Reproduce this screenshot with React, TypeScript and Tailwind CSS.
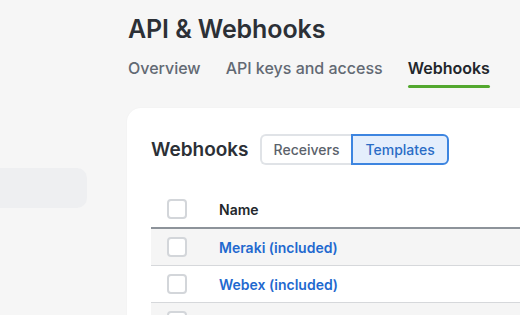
export default function App() {
  const rows = [
    { name: 'Meraki (included)', shaded: true },
    { name: 'Webex (included)', shaded: false },
    { name: '', shaded: true },
  ];

  return (
    <div className="flex h-[315px] w-[520px] overflow-hidden bg-[#f6f6f6] font-['Inter',sans-serif]">
      {/* side nav */}
      <div className="w-[127px] shrink-0">
        <div className="mt-[168px] h-[40px] w-[87px] rounded-r-[10px] bg-[#eeeff1]" />
      </div>

      <div className="flex min-w-0 flex-1 flex-col">
        <h1 className="mt-[13px] pl-px text-[25px] font-semibold leading-[32px] tracking-[-0.1px] text-[#2c3036]">
          API &amp; Webhooks
        </h1>
        <div className="mt-[11px] flex gap-[25px] pl-px text-[16px] font-medium leading-[24px]">
          <span className="text-[#626973]">Overview</span>
          <span className="text-[#626973]">API keys and access</span>
          <div className="flex flex-col">
            <span className="font-semibold text-[#22262b]">Webhooks</span>
            <div className="mt-[5px] h-[3px] rounded-full bg-[#53a82f]" />
          </div>
        </div>

        <div className="mt-[20px] flex-1 rounded-tl-[14px] bg-white pl-[24px] pt-[26px] shadow-[0_0_2px_rgba(0,0,0,0.04)]">
          <div className="flex items-center gap-[11px]">
            <h2 className="text-[19px] font-semibold leading-[28px] text-[#2c3036]">Webhooks</h2>
            <div className="flex text-[14px] font-medium leading-[20px]">
              <button className="h-[31px] rounded-l-[6px] border-2 border-r-0 border-[#e0e3e7] bg-white px-[12px] text-[#5b626b]">
                Receivers
              </button>
              <button className="h-[31px] rounded-r-[6px] border-2 border-[#3d85e0] bg-[#e4eefc] px-[12px] text-[#2a6cc6]">
                Templates
              </button>
            </div>
          </div>

          <div className="mt-[26px]">
            <div className="flex h-[38px] items-center border-b-2 border-[#8d939a] pl-[16px]">
              <span className="h-[20px] w-[20px] rounded-[4px] border-2 border-[#d3d6da] bg-white" />
              <span className="ml-[32px] text-[14px] font-semibold text-[#23272c]">Name</span>
            </div>
            {rows.map((r, i) => (
              <div
                key={i}
                className={`flex h-[37px] items-center border-b border-[#d6d8db] pl-[16px] ${r.shaded ? 'bg-[#f5f5f5]' : 'bg-white'}`}
              >
                <span className="h-[20px] w-[20px] rounded-[4px] border-2 border-[#d3d6da] bg-white" />
                {r.name && (
                  <span className="ml-[32px] text-[14px] font-semibold text-[#1f69cf]">{r.name}</span>
                )}
              </div>
            ))}
          </div>
        </div>
      </div>
    </div>
  );
}
